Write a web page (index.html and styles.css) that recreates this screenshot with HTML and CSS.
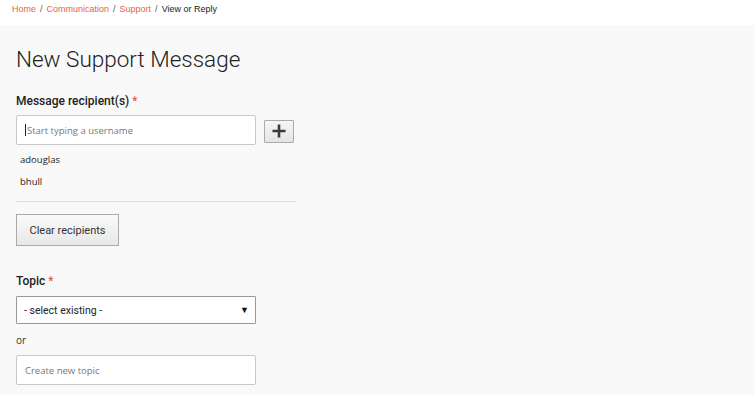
FILE: index.html
```html
<!DOCTYPE html>
<html>
<head>
<meta charset="utf-8">
<link rel="stylesheet" href="styles.css">
</head>
<body>
<nav class="crumbs">
  <a href="#">Home</a><span class="sep">/</span><a href="#">Communication</a><span class="sep">/</span><a href="#">Support</a><span class="sep">/</span><span class="cur">View or Reply</span>
</nav>
<main class="page">
  <h1 class="title">New Support Message</h1>
  <label class="label">Message recipient(s) <span class="req">*</span></label>
  <div class="recip-row">
    <div class="text-input"><span class="caret"></span>Start typing a username</div>
    <button class="plus-btn" type="button">
      <svg width="14" height="14" viewBox="0 0 14 14"><path d="M7 0.5v13M0.5 7h13" stroke="#3a3a3a" stroke-width="2.6"/></svg>
    </button>
  </div>
  <ul class="recips">
    <li>adouglas</li>
    <li>bhull</li>
  </ul>
  <div class="rule"></div>
  <button class="btn" type="button">Clear recipients</button>
  <label class="label topic-label">Topic <span class="req">*</span></label>
  <div class="select"><span>- select existing -</span><span class="arrow">&#9660;</span></div>
  <div class="or">or</div>
  <div class="text-input plain">Create new topic</div>
</main>
</body>
</html>
```
FILE: styles.css
```css
html, body { margin: 0; padding: 0; }
body { background: #f9f9f9; font-family: "Open Sans", "Liberation Sans", sans-serif; color: #222; }
.crumbs { background: #fff; height: 25px; box-sizing: border-box; padding: 2px 12px 0; font-family: "Liberation Sans", sans-serif; font-size: 9px; line-height: 14px; }
.crumbs a { color: #e9633f; text-decoration: none; }
.crumbs .sep { color: #555; margin: 0 4px; }
.crumbs .cur { color: #222; }
.page { padding: 19px 16px 0; }
.title { font-family: Roboto, sans-serif; font-weight: 300; font-size: 22.5px; line-height: 30px; margin: 0 0 19px; color: #222; }
.label { display: block; font-family: Roboto, sans-serif; font-weight: 500; font-size: 12px; line-height: 16px; color: #222; margin-bottom: 6px; }
.req { color: #e04a4a; font-weight: 400; }
.recip-row { display: flex; align-items: center; gap: 8px; }
.text-input { width: 240px; height: 30px; box-sizing: border-box; border: 1px solid #c8c8c8; border-radius: 2px; background: #fff; font-size: 9.5px; color: #777; display: flex; align-items: center; padding-left: 8px; }
.caret { display: inline-block; width: 1px; height: 12px; background: #222; margin-right: 1px; }
.plus-btn { width: 30px; height: 23px; margin-top: 2px; border: 1px solid #aaa; border-radius: 1px; background: linear-gradient(#f6f6f6, #e4e4e4); display: flex; align-items: center; justify-content: center; padding: 0; }
.recips { list-style: none; margin: 4px 0 0; padding: 0 0 0 4px; font-size: 9.5px; line-height: 22px; color: #222; }
.rule { width: 280px; height: 1px; background: #dcdcdc; margin: 8px 0 12px; }
.btn { height: 32px; width: 103px; border: 1px solid #aaa; background: linear-gradient(#fafafa, #e8e8e8); font-family: Roboto, sans-serif; font-size: 11px; color: #333; padding: 0; display: block; }
.topic-label { margin-top: 27px; margin-bottom: 7px; }
.select { width: 240px; height: 28px; box-sizing: border-box; border: 1px solid #999; border-radius: 1px; background: #fff; display: flex; align-items: center; justify-content: space-between; padding: 0 6px 0 7px; font-family: Roboto, sans-serif; font-size: 10.5px; color: #222; }
.select .arrow { font-size: 9px; color: #111; }
.or { font-size: 10px; line-height: 14px; margin: 9px 0 8px; color: #333; }
.plain { color: #777; }
```
